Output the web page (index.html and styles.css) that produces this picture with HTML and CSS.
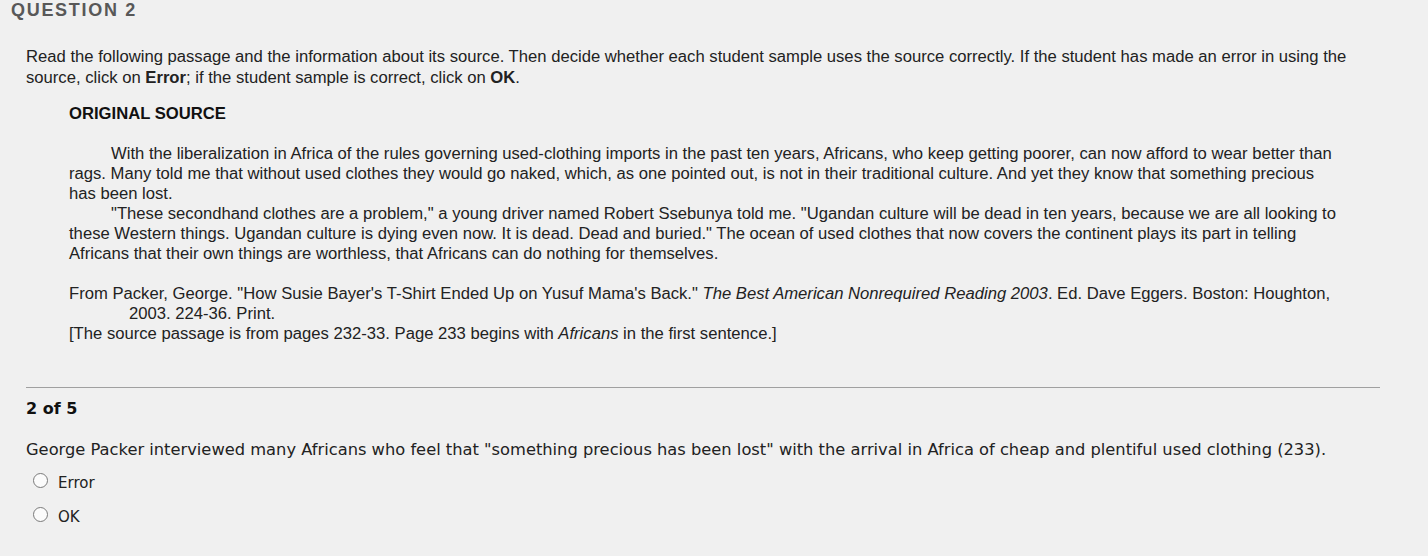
FILE: index.html
```html
<!DOCTYPE html>
<html>
<head>
<meta charset="utf-8">
<link rel="stylesheet" href="styles.css">
</head>
<body>
<h2 class="q-title">QUESTION 2</h2>
<div class="content">
  <p class="instructions">Read the following passage and the information about its source. Then decide whether each student sample uses the source correctly. If the student has made an error in using the source, click on <b>Error</b>; if the student sample is correct, click on <b>OK</b>.</p>
  <div class="source">
    <h3 class="source-title">ORIGINAL SOURCE</h3>
    <p class="passage">With the liberalization in Africa of the rules governing used-clothing imports in the past ten years, Africans, who keep getting poorer, can now afford to wear better than rags. Many told me that without used clothes they would go naked, which, as one pointed out, is not in their traditional culture. And yet they know that something precious has been lost.</p>
    <p class="passage">"These secondhand clothes are a problem," a young driver named Robert Ssebunya told me. "Ugandan culture will be dead in ten years, because we are all looking to these Western things. Ugandan culture is dying even now. It is dead. Dead and buried." The ocean of used clothes that now covers the continent plays its part in telling Africans that their own things are worthless, that Africans can do nothing for themselves.</p>
    <p class="citation">From Packer, George. "How Susie Bayer's T-Shirt Ended Up on Yusuf Mama's Back." <i>The Best American Nonrequired Reading 2003</i>. Ed. Dave Eggers. Boston: Houghton, 2003. 224-36. Print.</p>
    <p class="note">[The source passage is from pages 232-33. Page 233 begins with <i>Africans</i> in the first sentence.]</p>
  </div>
  <hr class="divider">
  <div class="item">
    <h4 class="count">2 of 5</h4>
    <p class="sample">George Packer interviewed many Africans who feel that "something precious has been lost" with the arrival in Africa of cheap and plentiful used clothing (233).</p>
    <label class="choice"><input type="radio" name="ans"><span>Error</span></label>
    <label class="choice"><input type="radio" name="ans"><span>OK</span></label>
  </div>
</div>
</body>
</html>
```
FILE: styles.css
```css
html, body {
  margin: 0;
  padding: 0;
  background: #f0f0f0;
}
body {
  font-family: "Liberation Sans", Arial, sans-serif;
  font-size: 16.65px;
  color: #222;
}
.q-title {
  margin: 0;
  padding: 0 0 0 11px;
  font-size: 18px;
  font-weight: bold;
  letter-spacing: 1.7px;
  color: #585858;
  line-height: 20px;
}
.content {
  width: 1354px;
  margin: 26px 0 0 26px;
}
.instructions {
  margin: 0;
  line-height: 21px;
}
.source {
  margin: 16px 40px 0 43px;
}
.source-title {
  margin: 0;
  font-size: 16.65px;
  font-weight: bold;
  line-height: 20px;
  color: #111;
}
.passage {
  margin: 0;
  line-height: 20px;
  text-indent: 42px;
}
.source-title + .passage {
  margin-top: 20px;
}
.citation {
  margin: 20px 0 0 0;
  line-height: 20px;
  padding-left: 60px;
  text-indent: -60px;
}
.note {
  margin: 0;
  line-height: 19px;
}
.divider {
  margin: 44px 0 0 0;
  border: 0;
  border-top: 1px solid #a0a0a0;
  height: 0;
}
.item {
  font-family: "DejaVu Sans", Verdana, sans-serif;
}
.count {
  margin: 11px 0 0 0;
  font-size: 16px;
  font-weight: bold;
  line-height: 20px;
  color: #111;
}
.sample {
  margin: 21px 0 0 0;
  font-size: 16.3px;
  line-height: 20px;
  color: #222;
}
.choice {
  display: flex;
  align-items: flex-start;
  font-size: 15px;
  line-height: 20px;
  height: 20px;
  margin-top: 10px;
}
.choice span {
  padding-top: 3px;
}
.choice input {
  appearance: none;
  -webkit-appearance: none;
  box-sizing: border-box;
  margin: 3px 10px 0 7px;
  width: 15px;
  height: 15px;
  border: 1px solid #7a7a7a;
  border-radius: 50%;
  background: #fbfbfb;
}
.choice + .choice {
  margin-top: 14px;
}
```
